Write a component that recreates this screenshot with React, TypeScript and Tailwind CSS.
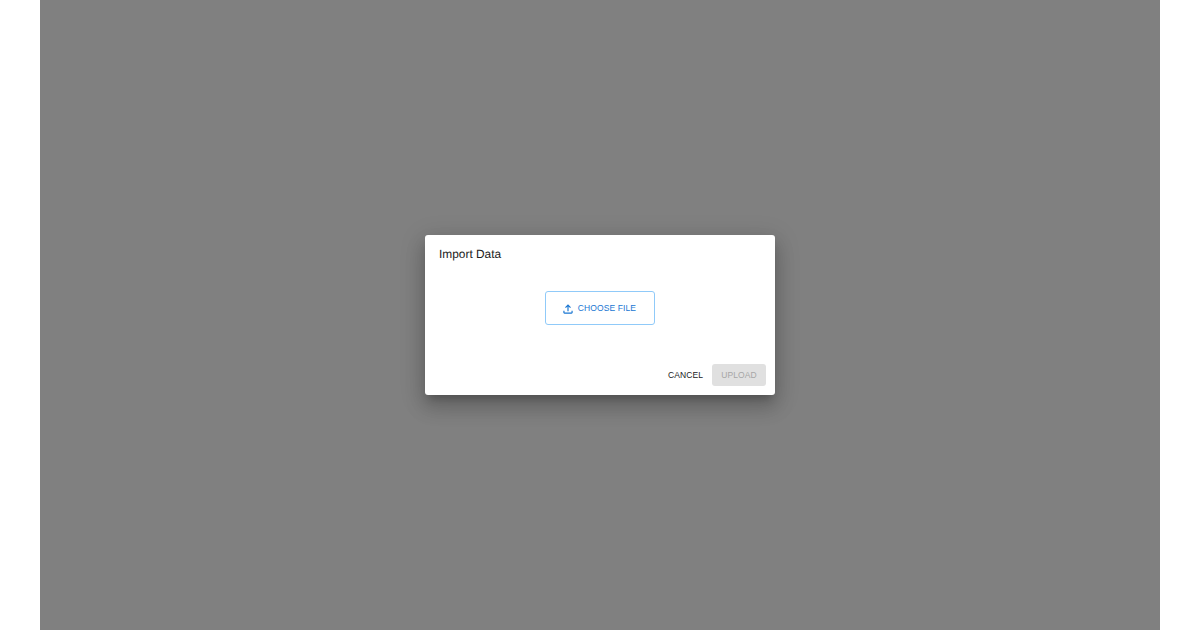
import React from "react";

const App: React.FC = () => {
  return (
    <div className="w-full h-[630px] bg-white flex justify-center overflow-hidden font-['Liberation_Sans',Arial,sans-serif] [text-rendering:geometricPrecision] antialiased">
      <div className="w-[1120px] h-full bg-[#808080] flex items-center justify-center">
        <div className="w-[350px] h-40 bg-white rounded-[3px] flex flex-col shadow-[0px_7px_8px_-4px_rgba(0,0,0,0.2),0px_12px_19px_2px_rgba(0,0,0,0.14),0px_5px_23px_4px_rgba(0,0,0,0.12)]">
          <h2 className="h-[38px] pl-3.5 pt-px flex items-center text-[11.9px] text-[#212121] font-normal">
            Import Data
          </h2>
          <div className="h-[91px] pt-[18px] flex justify-center">
            <button className="w-[110px] h-[34px] pt-px pr-[3px] flex items-center justify-center gap-[3px] border border-[#90caf9] rounded-[3px] text-[8.5px] tracking-[0.1px] uppercase text-[#1976d2]">
              <svg className="w-[14px] h-[14px] fill-current" viewBox="0 0 24 24">
                <path d="M18 15v3H6v-3H4v3c0 1.1.9 2 2 2h12c1.1 0 2-.9 2-2v-3h-2zM7 9l1.41 1.41L11 7.83V16h2V7.83l2.59 2.58L17 9l-5-5-5 5z" />
              </svg>
              Choose File
            </button>
          </div>
          <div className="flex justify-end items-center gap-[5px] pr-[9px]">
            <button className="h-[22px] px-[4px] pt-px rounded-[3px] text-[8.5px] tracking-[0.1px] uppercase text-[#212121]">
              Cancel
            </button>
            <button className="w-[54px] h-[22px] pt-px bg-[#e0e0e0] rounded-[3px] text-[8.5px] tracking-[0.1px] uppercase text-[#a6a6a6]">
              Upload
            </button>
          </div>
        </div>
      </div>
    </div>
  );
};

export default App;
